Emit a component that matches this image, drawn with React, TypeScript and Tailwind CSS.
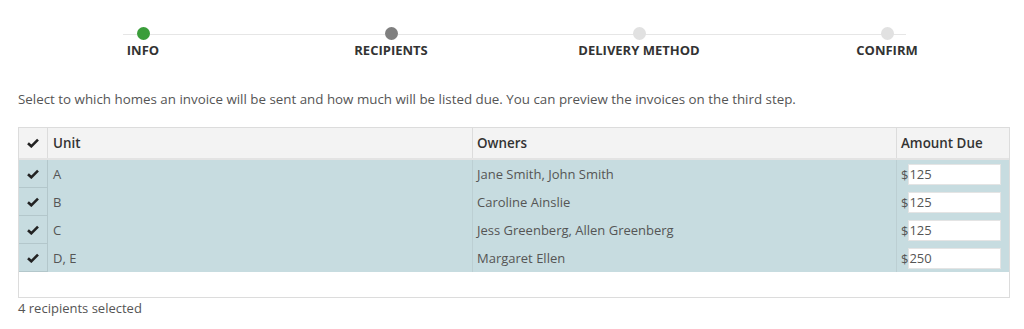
import React from 'react'

const steps = [
  { label: 'INFO', dot: 'bg-[#3a9d3a]' },
  { label: 'RECIPIENTS', dot: 'bg-[#7f7f7f]' },
  { label: 'DELIVERY METHOD', dot: 'bg-[#e1e1e1]' },
  { label: 'CONFIRM', dot: 'bg-[#e1e1e1]' },
]

const rows = [
  { unit: 'A', owners: 'Jane Smith, John Smith', amount: '125' },
  { unit: 'B', owners: 'Caroline Ainslie', amount: '125' },
  { unit: 'C', owners: 'Jess Greenberg, Allen Greenberg', amount: '125' },
  { unit: 'D, E', owners: 'Margaret Ellen', amount: '250' },
]

function Check() {
  return (
    <svg width="12" height="10" viewBox="0 0 12 10" className="text-[#222]">
      <path d="M1 5.2 L4.3 8.3 L11 1.6" fill="none" stroke="currentColor" strokeWidth="2.6" />
    </svg>
  )
}

export default function App() {
  return (
    <div className="w-[1024px] h-[329px] bg-white text-[#555] font-['Open_Sans',sans-serif] text-[13px]">
      <div className="relative pt-[27px] h-[62px]">
        <div className="absolute left-[123px] right-[118px] top-[33.5px] h-px bg-[#e6e6e6]" />
        <div className="relative grid grid-cols-4 w-[992px] ml-[19px]">
          {steps.map((s) => (
            <div key={s.label} className="flex flex-col items-center">
              <div className={`w-[13px] h-[13px] rounded-full ${s.dot}`} />
              <div className="mt-[2px] text-[13px] font-bold text-[#333] leading-[16px] whitespace-nowrap">{s.label}</div>
            </div>
          ))}
        </div>
      </div>

      <p className="ml-[18px] mt-[28px] leading-[18px] text-[13.35px] whitespace-nowrap">
        Select to which homes an invoice will be sent and how much will be listed due. You can preview the invoices on the third step.
      </p>

      <div className="ml-[18px] mt-[19px] w-[992px] border border-[#dcdcdc]">
        <div className="flex h-[32px] bg-[#f3f3f3] border-b-2 border-[#e3e3e3] font-semibold text-[#333] items-stretch text-[13.4px]">
          <div className="w-[29px] flex items-center justify-center border-r border-[#dcdcdc]">
            <Check />
          </div>
          <div className="w-[425px] flex items-center pl-[5px] border-r border-[#dcdcdc]">Unit</div>
          <div className="w-[424px] flex items-center pl-[4px] border-r border-[#dcdcdc]">Owners</div>
          <div className="flex-1 flex items-center pl-[4px]">Amount Due</div>
        </div>
        {rows.map((r) => (
          <div key={r.unit} className="flex h-[28px] bg-[#c7dce0] items-stretch">
            <div className="w-[29px] flex items-center justify-center border-r border-b border-[#b3c7cb]">
              <Check />
            </div>
            <div className="w-[425px] flex items-center pl-[5px] pt-px border-r border-[#bccfd3]">{r.unit}</div>
            <div className="w-[424px] flex items-center pl-[4px] pt-px border-r border-[#bccfd3]">{r.owners}</div>
            <div className="flex-1 flex items-center pl-[4px]">
              <span className="leading-[21px] pt-[2px]">$</span>
              <div className="w-[93px] h-[21px] bg-white border border-[#e4e4e4] flex items-center pt-px text-[#555]">
                {r.amount}
              </div>
            </div>
          </div>
        ))}
        <div className="h-[25px] bg-white" />
      </div>

      <div className="ml-[18px] mt-px leading-[18px]">4 recipients selected</div>
    </div>
  )
}
